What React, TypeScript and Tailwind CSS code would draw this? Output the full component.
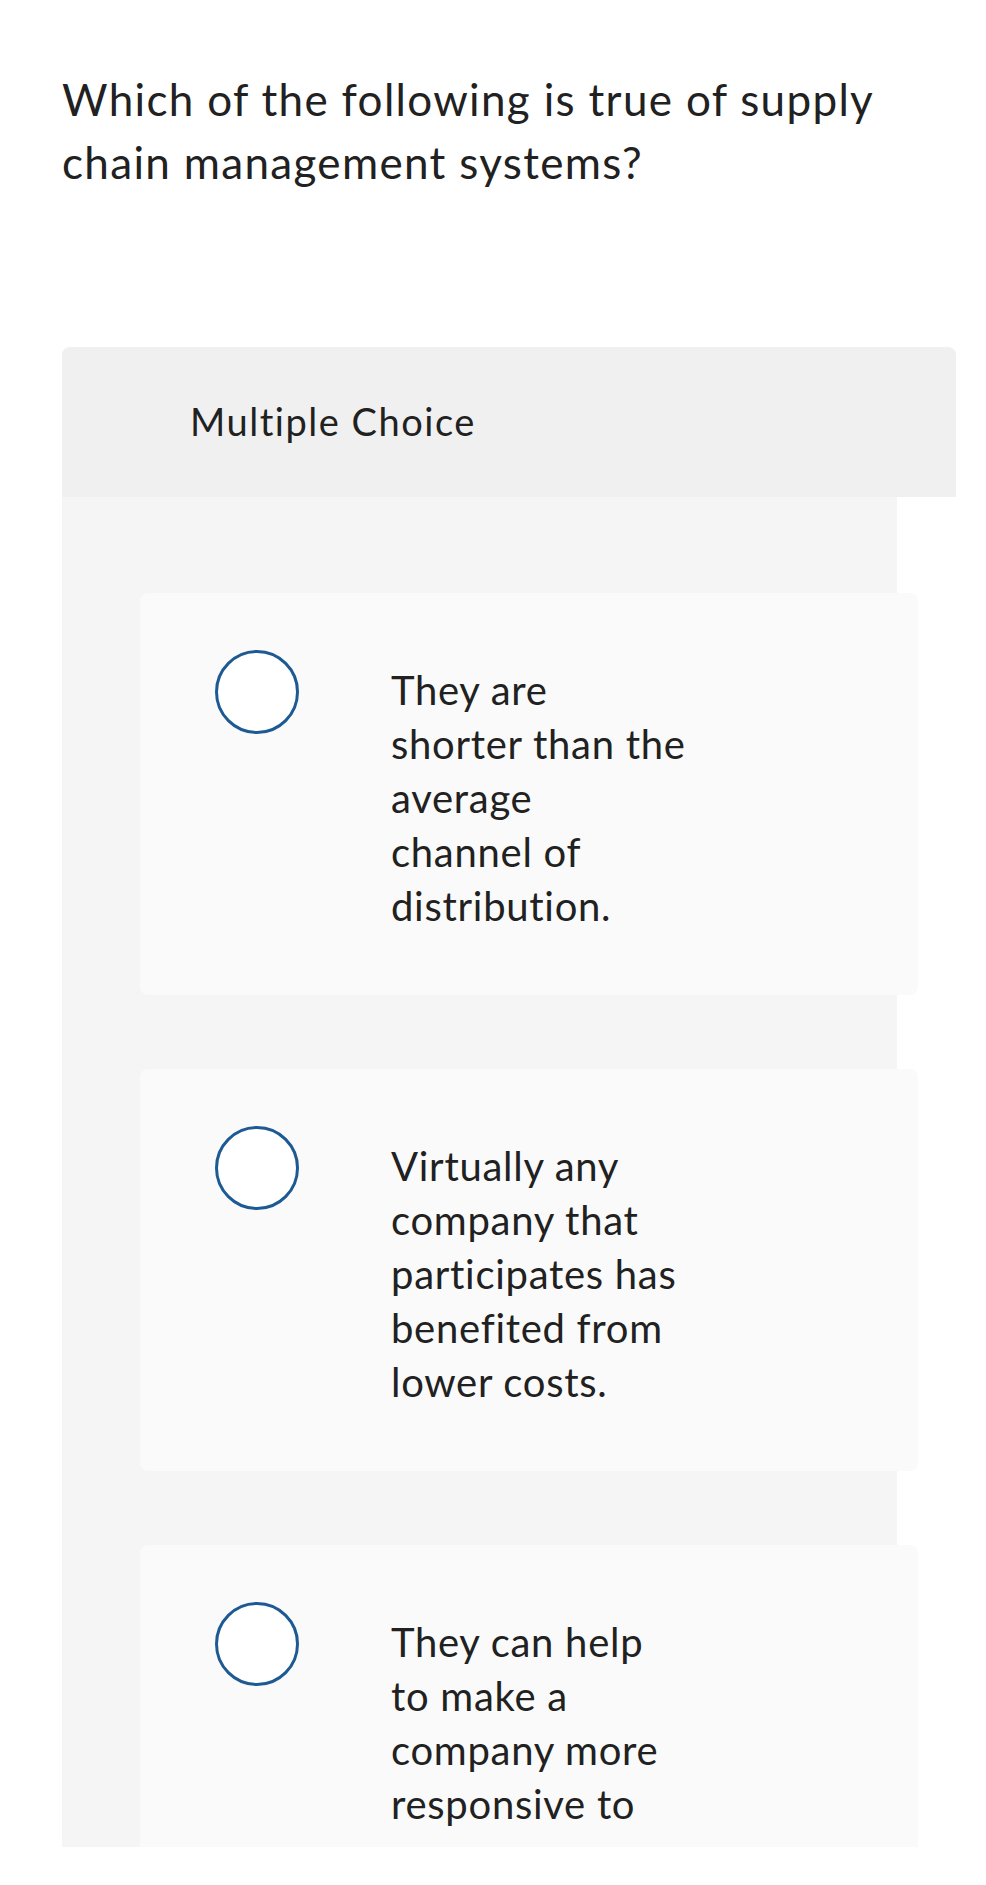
import React from 'react'

// each answer broken the way the reference wraps it
const options = [
  ['They are', 'shorter than the', 'average', 'channel of', 'distribution.'],
  ['Virtually any', 'company that', 'participates has', 'benefited from', 'lower costs.'],
  ['They can help', 'to make a', 'company more', 'responsive to'],
]

function Radio() {
  return (
    <span className="block w-[84px] h-[84px] shrink-0 rounded-full border-[3px] border-[#1d5a94] bg-white" />
  )
}

export default function App() {
  return (
    <div
      className="min-h-[1885px] bg-white text-[#212121] pl-[62px]"
      style={{ fontFamily: 'Lato, "Open Sans", sans-serif' }}
    >
      <h1 className="pt-[68px] text-[44px] leading-[63px] font-normal tracking-[0.03em] w-[860px]">
        Which of the following is true of supply chain management systems?
      </h1>

      <div className="mt-[153px] w-[894px]">
        <div className="h-[150px] rounded-t-lg bg-[#f0f0f0] pl-[128px] pt-[50px]">
          <div className="text-[38px] leading-[48px] tracking-[0.04em]">Multiple Choice</div>
        </div>

        {/* Answer list */}
        <div className="w-[835px] h-[1350px] bg-[#f5f5f5] overflow-y-clip pt-[96px] pl-[78px] flex flex-col gap-[74px]">
          {options.map((lines) => (
            <div
              key={lines[0] + lines[1]}
              className="w-[778px] h-[402px] shrink-0 rounded-lg bg-[#fafafa] flex items-start pl-[75px] pt-[57px]"
            >
              <Radio />
              <div className="ml-[92px] mt-[13px] text-[40px] leading-[54px] tracking-[0.018em]">
                {lines.map((line) => (
                  <span key={line} className="block whitespace-nowrap">
                    {line}
                  </span>
                ))}
              </div>
            </div>
          ))}
        </div>
      </div>
    </div>
  )
}
